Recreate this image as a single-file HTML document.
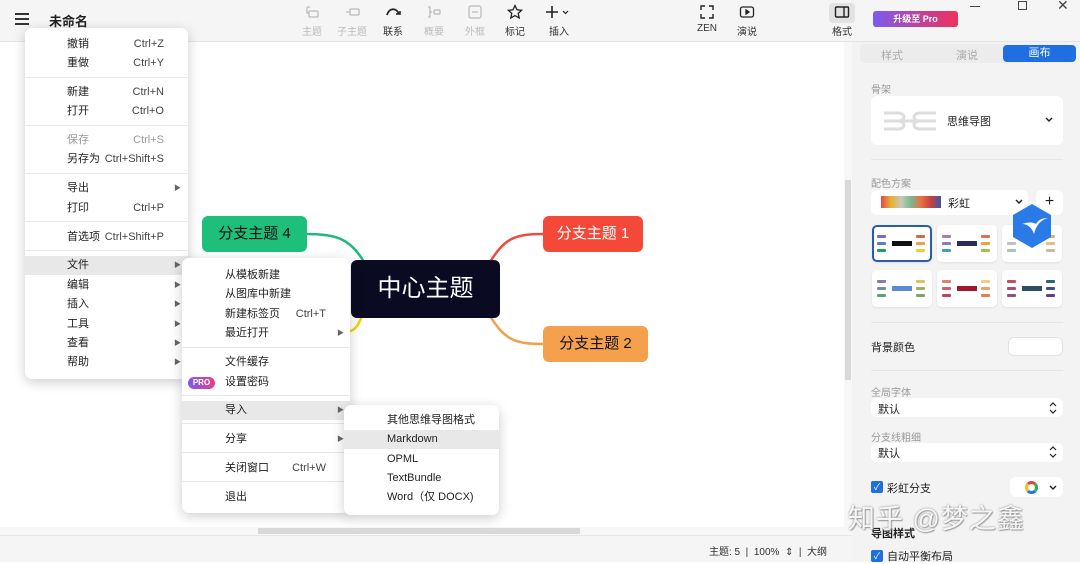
<!DOCTYPE html>
<html><head><meta charset="utf-8">
<style>
*{box-sizing:border-box;margin:0;padding:0}
body{width:1080px;height:562px;overflow:hidden;position:relative;background:#fff;font-family:"Liberation Sans","Noto Sans CJK SC",sans-serif;color:#222}
.a{position:absolute}
.top{left:0;top:0;width:1080px;height:42px;background:#f5f5f5;border-bottom:1px solid #e4e4e4}
.tb{position:absolute;top:4px;width:40px;text-align:center;font-size:10px;color:#333}
.tb.d{color:#bbb}
.tb svg{display:block;margin:0 auto 3px}
.menu{position:absolute;background:#fff;border-radius:7px;box-shadow:0 3px 12px rgba(0,0,0,.2);font-size:11px}
.it{position:absolute;left:0;right:0;height:19px;line-height:19px}
.it .l{position:absolute}
.it .s{position:absolute;color:#444}
.it .ar{position:absolute;font-size:7px;color:#666}
.hl{background:#e8e8e8}
.sep{position:absolute;left:0;right:0;height:1px;background:#e8e8e8}
.node{position:absolute;border-radius:6px;text-align:center}
.panel{left:852px;top:42px;width:228px;height:520px;background:#f3f3f3}
.lbl{position:absolute;font-size:10px;color:#999}
.box{position:absolute;background:#fff;border-radius:6px}
.th{position:absolute;width:60px;height:37px;background:#fff;border-radius:5px;box-shadow:0 1px 2px rgba(0,0,0,.08)}
.m{position:absolute;width:9px;height:3px;border-radius:1px}
.chev{position:absolute}
</style></head><body>
<div class="a top"></div>
<div class="a" style="left:15px;top:13px;width:14px;height:2px;background:#333;box-shadow:0 5px 0 #333,0 10px 0 #333"></div>
<div class="a" style="left:49px;top:11px;font-size:13px;font-weight:bold;color:#222">未命名</div>

<div class="tb d" style="left:292px"><svg width="16" height="16" viewBox="0 0 16 16" fill="none" stroke="#bbb" stroke-width="1.3"><rect x="5" y="7" width="9" height="6" rx="1"/><path d="M3 3v6h2M3 3h3"/></svg>主题</div>
<div class="tb d" style="left:332px"><svg width="16" height="16" viewBox="0 0 16 16" fill="none" stroke="#bbb" stroke-width="1.3"><rect x="6" y="5" width="9" height="6" rx="1"/><path d="M2 8h3"/></svg>子主题</div>
<div class="tb" style="left:373px"><svg width="16" height="16" viewBox="0 0 16 16" fill="none" stroke="#222" stroke-width="1.8"><path d="M2 11C4 4 11 3 14 10"/><path d="M11 10h4v-3" stroke-width="1.5"/></svg>联系</div>
<div class="tb d" style="left:414px"><svg width="16" height="16" viewBox="0 0 16 16" fill="none" stroke="#bbb" stroke-width="1.3"><path d="M2 3h2v10H2M4 8h2"/><rect x="8" y="6" width="6" height="4" rx="1"/></svg>概要</div>
<div class="tb d" style="left:455px"><svg width="16" height="16" viewBox="0 0 16 16" fill="none" stroke="#bbb" stroke-width="1.3"><rect x="2" y="2" width="12" height="12" rx="2"/><path d="M5 8h6"/></svg>外框</div>
<div class="tb" style="left:495px"><svg width="16" height="16" viewBox="0 0 16 16" fill="none" stroke="#222" stroke-width="1.3"><path d="M8 1.5l2 4.3 4.6.5-3.4 3.1 1 4.6L8 11.6 3.8 14l1-4.6L1.4 6.3 6 5.8z"/></svg>标记</div>
<div class="tb" style="left:539px"><svg width="30" height="16" viewBox="0 0 30 16" fill="none" stroke="#222" stroke-width="1.6"><path d="M8 2v12M2 8h12"/><path d="M19 7l2.5 2.5L24 7" stroke-width="1.2"/></svg>插入</div>
<div class="tb" style="left:687px"><svg width="16" height="16" viewBox="0 0 16 16" fill="none" stroke="#222" stroke-width="1.4"><path d="M2 6V2h4M10 2h4v4M14 10v4h-4M6 14H2v-4"/></svg>ZEN</div>
<div class="tb" style="left:727px"><svg width="16" height="16" viewBox="0 0 16 16" fill="none" stroke="#222" stroke-width="1.3"><rect x="1.5" y="3" width="13" height="10" rx="2"/><path d="M7 6v4l3-2z" fill="#222"/></svg>演说</div>
<div class="a" style="left:829px;top:3px;width:26px;height:20px;background:#e2e2e2;border-radius:4px"></div>
<div class="tb" style="left:822px"><svg width="16" height="16" viewBox="0 0 16 16" fill="none" stroke="#222" stroke-width="1.4"><rect x="1.5" y="3" width="13" height="10" rx="1"/><path d="M10 3v10"/></svg>格式</div>
<div class="a" style="left:873px;top:11px;width:85px;height:16px;border-radius:3px;background:linear-gradient(90deg,#7b5cf0,#f0305a);color:#fff;font-size:9px;font-weight:bold;text-align:center;line-height:16px">升级至 Pro</div>
<div class="a" style="left:970px;top:6px;width:10px;height:1px;background:#444"></div>
<div class="a" style="left:1018px;top:1px;width:9px;height:9px;border:1px solid #444"></div>
<div class="a" style="left:1057px;top:-3px;font-size:14px;color:#444">✕</div>

<svg class="a" style="left:0;top:0" width="850" height="530">
<path d="M490 262 C505 238 515 234 543 234" stroke="#f04a3c" stroke-width="2.5" fill="none"/>
<path d="M490 316 C505 340 515 344 543 344" stroke="#f0a04b" stroke-width="2.5" fill="none"/>
<path d="M364 262 C350 238 335 234 307 234" stroke="#1db97a" stroke-width="2.5" fill="none"/>
<path d="M362 316 C358 326 355 330 350 331" stroke="#f2d000" stroke-width="2.5" fill="none"/>
</svg>
<div class="node" style="left:351px;top:260px;width:149px;height:58px;background:#0a0a23;color:#fff;font-size:24px;line-height:58px">中心主题</div>
<div class="node" style="left:202px;top:216px;width:105px;height:36px;background:#1dbf7a;color:#111;font-size:15px;line-height:36px">分支主题 4</div>
<div class="node" style="left:543px;top:216px;width:100px;height:36px;background:#f44838;color:#fff;font-size:15px;line-height:36px">分支主题 1</div>
<div class="node" style="left:543px;top:326px;width:105px;height:36px;background:#f4a04c;color:#111;font-size:15px;line-height:36px">分支主题 2</div>

<div class="a" style="left:844px;top:42px;width:8px;height:485px;background:#f7f7f7"></div>
<div class="a" style="left:845px;top:180px;width:6px;height:200px;background:#d8d8d8"></div>
<div class="a" style="left:0;top:527px;width:852px;height:8px;background:#f7f7f7"></div>
<div class="a" style="left:258px;top:528px;width:322px;height:6px;background:#d8d8d8"></div>
<div class="a" style="left:0;top:535px;width:852px;height:27px;background:#f5f5f5;border-top:1px solid #e6e6e6"></div>
<div class="a" style="left:709px;top:543px;font-size:10px;color:#333">主题: 5 &nbsp;|&nbsp; 100% &nbsp;⇕ &nbsp;|&nbsp; 大纲</div>

<div class="a panel"></div>
<div class="a" style="left:860px;top:44px;width:208px;height:19px;background:#ececec;border-radius:4px"></div>
<div class="a" style="left:881px;top:47px;font-size:11px;color:#aaa">样式</div>
<div class="a" style="left:956px;top:47px;font-size:11px;color:#aaa">演说</div>
<div class="a" style="left:1003px;top:45px;width:73px;height:17px;background:#1f6fe0;border-radius:4px;color:#fff;font-size:11px;text-align:center;line-height:17px">画布</div>
<div class="lbl" style="left:871px;top:81px">骨架</div>
<div class="box" style="left:871px;top:96px;width:192px;height:49px"></div>
<svg class="a" style="left:880px;top:108px" width="58" height="26"><g stroke="#ddd" stroke-width="3" fill="none"><path d="M4 5h14M4 13h14M4 21h14M18 13h22M18 5c8 0 8 8 0 8M18 21c8 0 8-8 0-8M40 13c-8 0-8-8 0-8h16M40 13c-8 0-8 8 0 8h16M40 13h16"/></g></svg>
<div class="a" style="left:947px;top:113px;font-size:11px">思维导图</div>
<svg class="chev" style="left:1045px;top:117px" width="8" height="6"><path d="M1 1l3 3 3-3" stroke="#222" stroke-width="1.4" fill="none"/></svg>
<div class="a" style="left:871px;top:159px;width:192px;height:1px;background:#e6e6e6"></div>
<div class="lbl" style="left:871px;top:175px">配色方案</div>
<div class="box" style="left:871px;top:190px;width:157px;height:25px"></div>
<div class="a" style="left:881px;top:196px;width:60px;height:12px;background:linear-gradient(90deg,#e04848,#e8b030,#c8c8b8,#78b890,#e87040,#c84040,#3858a8)"></div>
<div class="a" style="left:948px;top:195px;font-size:11px">彩虹</div>
<svg class="chev" style="left:1015px;top:199px" width="8" height="6"><path d="M1 1l3 3 3-3" stroke="#222" stroke-width="1.4" fill="none"/></svg>
<div class="box" style="left:1036px;top:190px;width:27px;height:25px;text-align:center;font-size:16px;line-height:24px">+</div>
<div class="th" style="left:872px;top:225px;border:2px solid #2a5cab"></div>
<div class="th" style="left:937px;top:225px"></div>
<div class="th" style="left:1002px;top:225px"></div>
<div class="th" style="left:872px;top:270px"></div>
<div class="th" style="left:937px;top:270px"></div>
<div class="th" style="left:1002px;top:270px"></div>
<div class="a" style="left:892px;top:241px;width:20px;height:5px;background:#111"></div>
<div class="m" style="left:877px;top:235px;background:#7a6ac0"></div><div class="m" style="left:877px;top:242px;background:#5a7ad0"></div><div class="m" style="left:877px;top:249px;background:#20a060"></div>
<div class="m" style="left:916px;top:235px;background:#e06040"></div><div class="m" style="left:916px;top:242px;background:#f0a040"></div><div class="m" style="left:916px;top:249px;background:#f0d030"></div>
<div class="a" style="left:957px;top:241px;width:20px;height:5px;background:#2a2a60"></div>
<div class="m" style="left:942px;top:235px;background:#a080c0"></div><div class="m" style="left:942px;top:242px;background:#8080c0"></div><div class="m" style="left:942px;top:249px;background:#40a0c0"></div>
<div class="m" style="left:981px;top:235px;background:#e07050"></div><div class="m" style="left:981px;top:242px;background:#f0a040"></div><div class="m" style="left:981px;top:249px;background:#a0c040"></div>
<div class="m" style="left:1046px;top:235px;background:#e0b080"></div><div class="m" style="left:1046px;top:242px;background:#e0c080"></div><div class="m" style="left:1046px;top:249px;background:#c0c0a0"></div>
<div class="m" style="left:1007px;top:242px;background:#c0c0c0"></div><div class="m" style="left:1007px;top:249px;background:#b0c0c0"></div>
<div class="a" style="left:892px;top:286px;width:20px;height:5px;background:#5a8ad0"></div>
<div class="m" style="left:877px;top:280px;background:#8080a0"></div><div class="m" style="left:877px;top:287px;background:#7090a0"></div><div class="m" style="left:877px;top:294px;background:#60a080"></div>
<div class="m" style="left:916px;top:280px;background:#e0c060"></div><div class="m" style="left:916px;top:287px;background:#a0b060"></div><div class="m" style="left:916px;top:294px;background:#80a070"></div>
<div class="a" style="left:957px;top:286px;width:20px;height:5px;background:#a01830"></div>
<div class="m" style="left:942px;top:280px;background:#e08070"></div><div class="m" style="left:942px;top:287px;background:#d06070"></div><div class="m" style="left:942px;top:294px;background:#c04060"></div>
<div class="m" style="left:981px;top:280px;background:#f0d070"></div><div class="m" style="left:981px;top:287px;background:#f0a060"></div><div class="m" style="left:981px;top:294px;background:#e08050"></div>
<div class="a" style="left:1022px;top:286px;width:20px;height:5px;background:#2c5060"></div>
<div class="m" style="left:1007px;top:280px;background:#c05060"></div><div class="m" style="left:1007px;top:287px;background:#a05070"></div><div class="m" style="left:1007px;top:294px;background:#905080"></div>
<div class="m" style="left:1046px;top:280px;background:#306080"></div><div class="m" style="left:1046px;top:287px;background:#405080"></div><div class="m" style="left:1046px;top:294px;background:#604080"></div>
<svg class="a" style="left:1010px;top:202px" width="44" height="48"><path d="M22 2l19 11v22L22 46 3 35V13z" fill="#2a7ae8"/><path d="M12 22c6 0 10 4 12 10 2-8 6-14 14-16-6 0-10 2-12 6-3-2-8-2-14 0z" fill="#fff"/></svg>
<div class="a" style="left:871px;top:322px;width:192px;height:1px;background:#e6e6e6"></div>
<div class="a" style="left:871px;top:339px;font-size:11px">背景颜色</div>
<div class="box" style="left:1008px;top:337px;width:55px;height:19px;border:1px solid #e2e2e2"></div>
<div class="a" style="left:871px;top:370px;width:192px;height:1px;background:#e6e6e6"></div>
<div class="lbl" style="left:871px;top:384px">全局字体</div>
<div class="box" style="left:871px;top:398px;width:192px;height:19px"></div>
<div class="a" style="left:878px;top:401px;font-size:11px">默认</div>
<svg class="chev" style="left:1049px;top:402px" width="8" height="12"><path d="M1 4l3-3 3 3M1 8l3 3 3-3" stroke="#222" stroke-width="1.2" fill="none"/></svg>
<div class="lbl" style="left:871px;top:429px">分支线粗细</div>
<div class="box" style="left:871px;top:443px;width:192px;height:19px"></div>
<div class="a" style="left:878px;top:445px;font-size:11px">默认</div>
<svg class="chev" style="left:1049px;top:446px" width="8" height="12"><path d="M1 4l3-3 3 3M1 8l3 3 3-3" stroke="#222" stroke-width="1.2" fill="none"/></svg>
<div class="a" style="left:871px;top:481px;width:12px;height:12px;background:#1f6fe0;border-radius:2px;color:#fff;font-size:9px;text-align:center;line-height:12px">✓</div>
<div class="a" style="left:887px;top:480px;font-size:11px">彩虹分支</div>
<div class="box" style="left:1010px;top:477px;width:53px;height:20px"></div>
<div class="a" style="left:1025px;top:481px;width:13px;height:13px;border-radius:50%;border:3px solid;border-color:#e84040 #30b050 #3070e0 #f0c020"></div>
<svg class="chev" style="left:1049px;top:485px" width="8" height="6"><path d="M1 1l3 3 3-3" stroke="#222" stroke-width="1.4" fill="none"/></svg>
<div class="a" style="left:871px;top:525px;font-size:11px;font-weight:bold">导图样式</div>
<div class="a" style="left:871px;top:550px;width:12px;height:12px;background:#1f6fe0;border-radius:2px;color:#fff;font-size:9px;text-align:center;line-height:12px">✓</div>
<div class="a" style="left:887px;top:548px;font-size:11px">自动平衡布局</div>
<div class="a" style="left:848px;top:497px;font-size:27px;color:rgba(255,255,255,.9);text-shadow:0 0 2px #888,1px 1px 1px #aaa;letter-spacing:1px">知乎 @梦之鑫</div>

<div class="menu" style="left:25px;top:28px;width:163px;height:351px">
<div class="it" style="top:7px"><span class="l" style="left:42px">撤销</span><span class="s" style="right:24px">Ctrl+Z</span></div>
<div class="it" style="top:26px"><span class="l" style="left:42px">重做</span><span class="s" style="right:24px">Ctrl+Y</span></div>
<div class="sep" style="top:49px"></div>
<div class="it" style="top:55px"><span class="l" style="left:42px">新建</span><span class="s" style="right:24px">Ctrl+N</span></div>
<div class="it" style="top:74px"><span class="l" style="left:42px">打开</span><span class="s" style="right:24px">Ctrl+O</span></div>
<div class="sep" style="top:97px"></div>
<div class="it" style="top:103px"><span class="l" style="left:42px;color:#999">保存</span><span class="s" style="right:24px;color:#999">Ctrl+S</span></div>
<div class="it" style="top:122px"><span class="l" style="left:42px">另存为</span><span class="s" style="right:24px">Ctrl+Shift+S</span></div>
<div class="sep" style="top:145px"></div>
<div class="it" style="top:151px"><span class="l" style="left:42px">导出</span><span class="ar" style="right:7px">▶</span></div>
<div class="it" style="top:171px"><span class="l" style="left:42px">打印</span><span class="s" style="right:24px">Ctrl+P</span></div>
<div class="sep" style="top:193px"></div>
<div class="it" style="top:200px"><span class="l" style="left:42px">首选项</span><span class="s" style="right:24px">Ctrl+Shift+P</span></div>
<div class="sep" style="top:222px"></div>
<div class="it hl" style="top:228px"><span class="l" style="left:42px">文件</span><span class="ar" style="right:7px">▶</span></div>
<div class="it" style="top:248px"><span class="l" style="left:42px">编辑</span><span class="ar" style="right:7px">▶</span></div>
<div class="it" style="top:267px"><span class="l" style="left:42px">插入</span><span class="ar" style="right:7px">▶</span></div>
<div class="it" style="top:287px"><span class="l" style="left:42px">工具</span><span class="ar" style="right:7px">▶</span></div>
<div class="it" style="top:306px"><span class="l" style="left:42px">查看</span><span class="ar" style="right:7px">▶</span></div>
<div class="it" style="top:325px"><span class="l" style="left:42px">帮助</span><span class="ar" style="right:7px">▶</span></div>
</div>

<div class="menu" style="left:182px;top:258px;width:168px;height:255px">
<div class="it" style="top:8px"><span class="l" style="left:43px">从模板新建</span></div>
<div class="it" style="top:27px"><span class="l" style="left:43px">从图库中新建</span></div>
<div class="it" style="top:47px"><span class="l" style="left:43px">新建标签页</span><span class="s" style="right:24px">Ctrl+T</span></div>
<div class="it" style="top:66px"><span class="l" style="left:43px">最近打开</span><span class="ar" style="right:6px">▶</span></div>
<div class="sep" style="top:89px"></div>
<div class="it" style="top:95px"><span class="l" style="left:43px">文件缓存</span></div>
<div class="it" style="top:115px"><span class="l" style="left:6px;top:4px;width:27px;height:12px;line-height:12px;border-radius:6px;background:linear-gradient(90deg,#7b5cf0,#e8407a);color:#fff;font-size:8px;font-weight:bold;text-align:center">PRO</span><span class="l" style="left:43px">设置密码</span></div>
<div class="sep" style="top:137px"></div>
<div class="it hl" style="top:143px"><span class="l" style="left:43px">导入</span><span class="ar" style="right:6px">▶</span></div>
<div class="sep" style="top:165px"></div>
<div class="it" style="top:172px"><span class="l" style="left:43px">分享</span><span class="ar" style="right:6px">▶</span></div>
<div class="sep" style="top:194px"></div>
<div class="it" style="top:201px"><span class="l" style="left:43px">关闭窗口</span><span class="s" style="right:24px">Ctrl+W</span></div>
<div class="sep" style="top:223px"></div>
<div class="it" style="top:230px"><span class="l" style="left:43px">退出</span></div>
</div>

<div class="menu" style="left:344px;top:405px;width:155px;height:110px">
<div class="it" style="top:6px"><span class="l" style="left:43px">其他思维导图格式</span></div>
<div class="it hl" style="top:25px"><span class="l" style="left:43px">Markdown</span></div>
<div class="it" style="top:45px"><span class="l" style="left:43px">OPML</span></div>
<div class="it" style="top:64px"><span class="l" style="left:43px">TextBundle</span></div>
<div class="it" style="top:83px"><span class="l" style="left:43px">Word（仅 DOCX)</span></div>
</div>
</body></html>
